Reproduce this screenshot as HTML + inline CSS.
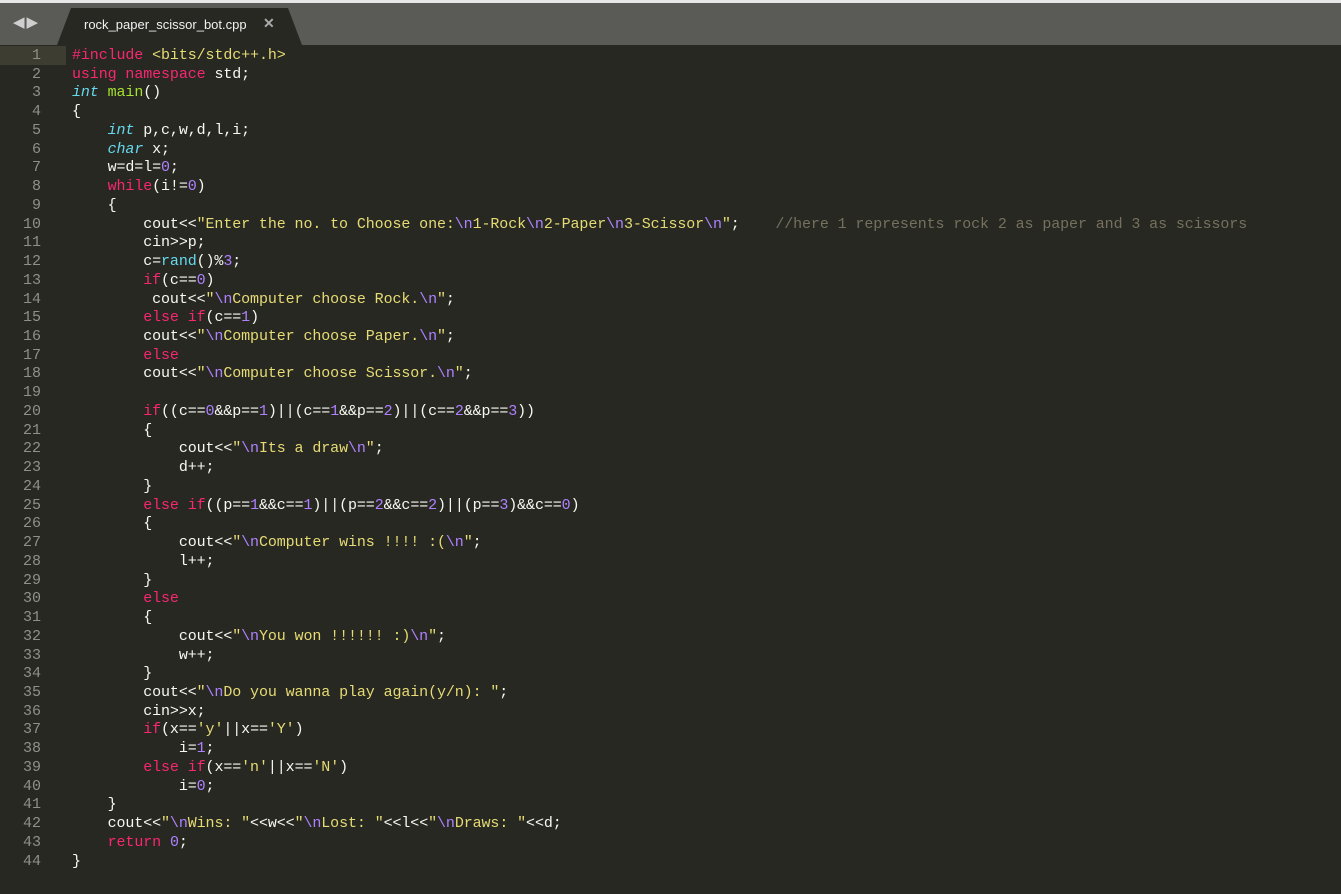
<!DOCTYPE html>
<html><head><meta charset="utf-8"><style>
html,body{margin:0;padding:0;width:1341px;height:894px;overflow:hidden;background:#272822;}
#top{position:absolute;left:0;top:0;width:1341px;height:3px;background:#e8e8e8;}
#bar{position:absolute;left:0;top:3px;width:1341px;height:42px;background:#5a5a56;}
#tab{position:absolute;left:57px;top:8px;width:245px;height:37px;background:#272822;clip-path:polygon(14px 0,231px 0,245px 37px,0 37px);}
#tabt{position:absolute;left:84px;top:17px;font:13px "Liberation Sans",sans-serif;color:#f0f0f0;}
#x{position:absolute;left:263px;top:15px;font:bold 14px "Liberation Sans",sans-serif;color:#aaa;}
#arr{position:absolute;left:13px;top:13px;font:15px "DejaVu Sans",sans-serif;color:#cfcfcf;letter-spacing:2px;}
#hl{position:absolute;left:0;top:46px;width:66px;height:19px;background:#3e3d32;}
#nums{position:absolute;left:0;top:47px;width:41px;text-align:right;font:15px/18.74px "Liberation Mono",monospace;color:#8f908a;}
#code{position:absolute;left:72px;top:47px;font:15px/18.74px "Liberation Mono",monospace;letter-spacing:-0.1px;color:#f8f8f2;white-space:pre;}
.k{color:#f92672}.s{color:#e6db74}.n{color:#ae81ff}.t{color:#66d9ef;font-style:italic}.f{color:#a6e22e}.c{color:#75715e}.b{color:#66d9ef}
</style></head><body>
<div id="top"></div><div id="bar"></div><div id="tab"></div>
<div id="arr">◀▶</div><div id="tabt">rock_paper_scissor_bot.cpp</div><div id="x">✕</div>
<div id="hl"></div>
<div id="nums">1<br>2<br>3<br>4<br>5<br>6<br>7<br>8<br>9<br>10<br>11<br>12<br>13<br>14<br>15<br>16<br>17<br>18<br>19<br>20<br>21<br>22<br>23<br>24<br>25<br>26<br>27<br>28<br>29<br>30<br>31<br>32<br>33<br>34<br>35<br>36<br>37<br>38<br>39<br>40<br>41<br>42<br>43<br>44</div>
<div id="code"><span class="k">#include</span> <span class="s">&lt;bits/stdc++.h&gt;</span>
<span class="k">using</span> <span class="k">namespace</span> std;
<span class="t">int</span> <span class="f">main</span>()
{
    <span class="t">int</span> p,c,w,d,l,i;
    <span class="t">char</span> x;
    w=d=l=<span class="n">0</span>;
    <span class="k">while</span>(i!=<span class="n">0</span>)
    {
        cout&lt;&lt;<span class="s">"Enter the no. to Choose one:<span class="n">\n</span>1-Rock<span class="n">\n</span>2-Paper<span class="n">\n</span>3-Scissor<span class="n">\n</span>"</span>;    <span class="c">//here 1 represents rock 2 as paper and 3 as scissors</span>
        cin&gt;&gt;p;
        c=<span class="b">rand</span>()%<span class="n">3</span>;
        <span class="k">if</span>(c==<span class="n">0</span>)
         cout&lt;&lt;<span class="s">"<span class="n">\n</span>Computer choose Rock.<span class="n">\n</span>"</span>;
        <span class="k">else</span> <span class="k">if</span>(c==<span class="n">1</span>)
        cout&lt;&lt;<span class="s">"<span class="n">\n</span>Computer choose Paper.<span class="n">\n</span>"</span>;
        <span class="k">else</span>
        cout&lt;&lt;<span class="s">"<span class="n">\n</span>Computer choose Scissor.<span class="n">\n</span>"</span>;

        <span class="k">if</span>((c==<span class="n">0</span>&amp;&amp;p==<span class="n">1</span>)||(c==<span class="n">1</span>&amp;&amp;p==<span class="n">2</span>)||(c==<span class="n">2</span>&amp;&amp;p==<span class="n">3</span>))
        {
            cout&lt;&lt;<span class="s">"<span class="n">\n</span>Its a draw<span class="n">\n</span>"</span>;
            d++;
        }
        <span class="k">else</span> <span class="k">if</span>((p==<span class="n">1</span>&amp;&amp;c==<span class="n">1</span>)||(p==<span class="n">2</span>&amp;&amp;c==<span class="n">2</span>)||(p==<span class="n">3</span>)&amp;&amp;c==<span class="n">0</span>)
        {
            cout&lt;&lt;<span class="s">"<span class="n">\n</span>Computer wins !!!! :(<span class="n">\n</span>"</span>;
            l++;
        }
        <span class="k">else</span>
        {
            cout&lt;&lt;<span class="s">"<span class="n">\n</span>You won !!!!!! :)<span class="n">\n</span>"</span>;
            w++;
        }
        cout&lt;&lt;<span class="s">"<span class="n">\n</span>Do you wanna play again(y/n): "</span>;
        cin&gt;&gt;x;
        <span class="k">if</span>(x==<span class="s">'y'</span>||x==<span class="s">'Y'</span>)
            i=<span class="n">1</span>;
        <span class="k">else</span> <span class="k">if</span>(x==<span class="s">'n'</span>||x==<span class="s">'N'</span>)
            i=<span class="n">0</span>;
    }
    cout&lt;&lt;<span class="s">"<span class="n">\n</span>Wins: "</span>&lt;&lt;w&lt;&lt;<span class="s">"<span class="n">\n</span>Lost: "</span>&lt;&lt;l&lt;&lt;<span class="s">"<span class="n">\n</span>Draws: "</span>&lt;&lt;d;
    <span class="k">return</span> <span class="n">0</span>;
}</div>
</body></html>
